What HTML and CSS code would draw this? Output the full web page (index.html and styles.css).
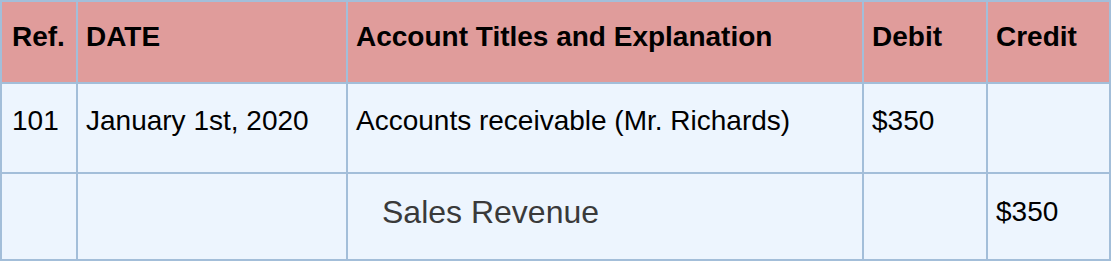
FILE: index.html
```html
<!DOCTYPE html>
<html>
<head>
<meta charset="utf-8">
<link rel="stylesheet" href="styles.css">
</head>
<body>
<table class="journal">
  <colgroup>
    <col class="c-ref">
    <col class="c-date">
    <col class="c-acct">
    <col class="c-debit">
    <col class="c-credit">
  </colgroup>
  <thead>
    <tr class="row-head">
      <th class="first">Ref.</th>
      <th>DATE</th>
      <th>Account Titles and Explanation</th>
      <th>Debit</th>
      <th>Credit</th>
    </tr>
  </thead>
  <tbody>
    <tr class="row-one">
      <td class="first">101</td>
      <td>January 1st, 2020</td>
      <td>Accounts receivable (Mr. Richards)</td>
      <td>$350</td>
      <td></td>
    </tr>
    <tr class="row-two">
      <td class="first"></td>
      <td></td>
      <td class="indent">Sales Revenue</td>
      <td></td>
      <td>$350</td>
    </tr>
  </tbody>
</table>
</body>
</html>
```

FILE: styles.css
```css
html, body {
  margin: 0;
  padding: 0;
  background: #ffffff;
}

.journal {
  table-layout: fixed;
  width: 1111px;
  border-collapse: separate;
  border-spacing: 2px;
  background: #a3bed9;
  font-family: "Liberation Sans", Arial, sans-serif;
  font-size: 28px;
  color: #000000;
}

.c-ref { width: 74px; }
.c-date { width: 268px; }
.c-acct { width: 514px; }
.c-debit { width: 122px; }
.c-credit { width: 121px; }

.journal th,
.journal td {
  padding: 19px 8px 0 8px;
  vertical-align: top;
  text-align: left;
  line-height: 32px;
  white-space: nowrap;
  overflow: hidden;
}

.journal th {
  background: #e09c9b;
  font-weight: bold;
}

.journal td {
  background: #edf5fe;
  font-weight: normal;
}

.journal .first {
  padding-left: 10px;
  padding-right: 4px;
}

.row-head { height: 80px; }
.row-one { height: 88px; }
.row-two { height: 85px; }

.row-one td { padding-top: 21px; }
.row-two td { padding-top: 22px; }

.journal td.indent {
  padding-left: 34px;
  padding-top: 20px;
  font-size: 32px;
  line-height: 36px;
  color: #3a3a3a;
}
```
